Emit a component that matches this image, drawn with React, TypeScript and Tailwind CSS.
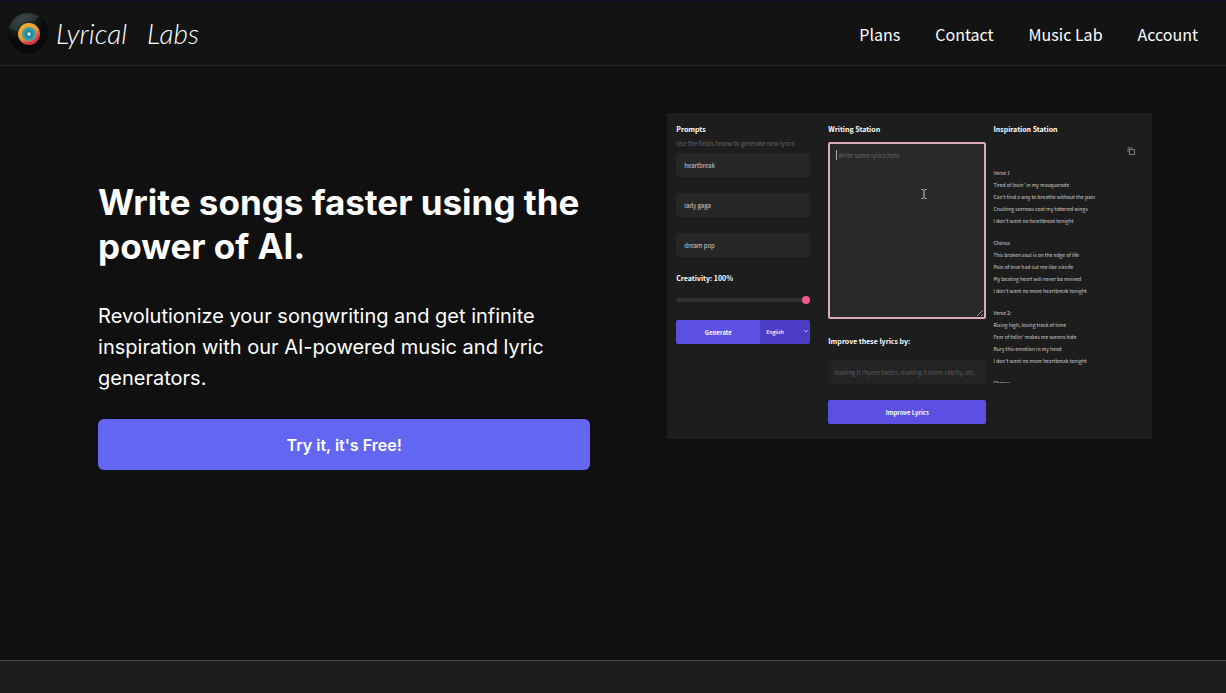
import { useId } from "react";

const cjk = "font-['Noto_Sans_CJK_SC','Open_Sans',sans-serif]";

const navLinks = ["Plans", "Contact", "Music Lab", "Account"];

const verses = [
  [
    "Verse 1",
    "Tired of losin' in my masquerade",
    "Can't find a way to breathe without the pain",
    "Crushing sorrows coat my tattered wings",
    "I don't want no heartbreak tonight",
  ],
  [
    "Chorus",
    "This broken soul is on the edge of life",
    "Pain of love had cut me like a knife",
    "My beating heart will never be revived",
    "I don't want no more heartbreak tonight",
  ],
  [
    "Verse 2:",
    "Rising high, losing track of time",
    "Fear of fallin' makes me wanna hide",
    "Bury this emotion in my head",
    "I don't want no more heartbreak tonight",
  ],
  ["Chorus"],
];

function VinylLogo() {
  return (
    <svg viewBox="0 0 42 44" className="h-11 w-[42px]" aria-hidden="true">
      <defs>
        <radialGradient id="disc" cx="0.35" cy="0.15" r="0.8">
          <stop offset="0" stopColor="#344041" />
          <stop offset="0.4" stopColor="#182021" />
          <stop offset="0.7" stopColor="#070a0b" />
          <stop offset="1" stopColor="#090909" />
        </radialGradient>
        <linearGradient id="ring" x1="0.2" y1="0" x2="0.8" y2="1">
          <stop offset="0" stopColor="#f3b22c" />
          <stop offset="0.5" stopColor="#ee9a2e" />
          <stop offset="0.75" stopColor="#dc3f4c" />
          <stop offset="1" stopColor="#c42f52" />
        </linearGradient>
      </defs>
      <circle cx="20" cy="22" r="20" fill="url(#disc)" />
      <path d="M1 17A20 20 0 0 1 31 5L26 11A12 12 0 0 0 9 20Z" fill="#3f4b4c" opacity="0.5" />
      <circle cx="21" cy="23" r="11" fill="url(#ring)" />
      <circle cx="21" cy="23" r="7.500" fill="#e5a746" />
      <circle cx="21" cy="23" r="7" fill="#3a9c9f" />
      <circle cx="21" cy="23" r="4" fill="#2287a2" />
      <circle cx="21" cy="23" r="1.700" fill="#e9f4ee" />
    </svg>
  );
}

function Header() {
  return (
    <header className="flex items-center justify-between border-t-2 border-b border-t-[#170b2b] border-b-[#292929] bg-[#131313] pt-[9px] pr-7 pb-2.5 pl-2">
      <a href="#home" className="flex items-center gap-1.5 text-white">
        <VinylLogo />
        <span className="flex gap-5 font-['Lato',sans-serif] text-[28px] leading-8 font-light italic">
          <span>Lyrical</span>
          <span>Labs</span>
        </span>
      </a>
      <nav className={`flex gap-[35px] pt-0.5 text-[16px] leading-6 font-normal text-white ${cjk}`}>
        {navLinks.map((label) => (
          <a key={label} href={`#${label.toLowerCase().replace(" ", "-")}`}>
            {label}
          </a>
        ))}
      </nav>
    </header>
  );
}

function Prompts() {
  const id = useId();
  return (
    <section className="flex flex-col">
      <h2 className="text-[7px] leading-3 font-bold text-white">Prompts</h2>
      <p className="mt-[3px] text-[6px] leading-3 whitespace-nowrap text-[#666666]">
        Use the fields below to generate new lyrics
      </p>
      <div className="mt-[3px] flex flex-col gap-4">
        {["heartbreak", "lady gaga", "dream pop"].map((value, i) => (
          <input
            key={value}
            aria-label={`Prompt ${i + 1}`}
            defaultValue={value}
            className="h-6 w-full rounded-xs bg-[#262626] px-2 text-[6px] text-[#d0d0d0] outline-none"
          />
        ))}
      </div>
      <label htmlFor={id} className="mt-[15px] text-[7px] leading-3 font-bold text-white">
        Creativity: 100%
      </label>
      <input
        id={id}
        type="range"
        min={0}
        max={100}
        defaultValue={100}
        className="mt-3 h-2 w-full appearance-none bg-transparent [&::-webkit-slider-runnable-track]:h-1 [&::-webkit-slider-runnable-track]:rounded-full [&::-webkit-slider-runnable-track]:bg-[#303030] [&::-webkit-slider-thumb]:-mt-0.5 [&::-webkit-slider-thumb]:h-2 [&::-webkit-slider-thumb]:w-2 [&::-webkit-slider-thumb]:appearance-none [&::-webkit-slider-thumb]:rounded-full [&::-webkit-slider-thumb]:bg-[#f0568f]"
      />
      <div className="mt-4 flex h-6 overflow-hidden rounded-xs text-white">
        <button className="flex-1 bg-[#5b50e2] text-[6px] font-bold">Generate</button>
        <div className="relative flex w-[50px] bg-[#4c3dc4]">
          <select
            aria-label="Language"
            className="block h-6 w-full appearance-none bg-transparent px-1.5 text-[5px] leading-6 font-medium outline-none"
          >
            <option>English</option>
          </select>
          <svg
            viewBox="0 0 6 4"
            className="pointer-events-none absolute top-2.5 right-0.5 w-1"
            fill="none"
            stroke="#ffffff"
            aria-hidden="true"
          >
            <path d="M0.500 0.500L3 3L5.500 0.500" />
          </svg>
        </div>
      </div>
    </section>
  );
}

function WritingStation() {
  const lyricsId = useId();
  const improveId = useId();
  return (
    <section className="flex flex-col">
      <label htmlFor={lyricsId} className="text-[7px] leading-3 font-bold text-white">
        Writing Station
      </label>
      <div className="relative mt-[7px] flex">
        <textarea
          id={lyricsId}
          placeholder="Write some lyrics here"
          className="h-[177px] w-full rounded-xs border-2 border-[#dcaab9] bg-[#292929] px-2 py-1 text-[6px] leading-4 text-white outline-none placeholder:text-[#686868]"
        />
        <span className="absolute top-2 left-2 h-2.5 w-px bg-[#a8a8a8]" />
        <svg
          viewBox="0 0 8 12"
          className="absolute top-[46px] left-[92px] h-3 w-2"
          fill="none"
          stroke="#cccccc"
          aria-hidden="true"
        >
          <path d="M1.500 1.500H3L4 2.500L5 1.500H6.500M4 2.500V9.500M1.500 10.500H3L4 9.500L5 10.500H6.500" />
        </svg>
      </div>
      <label htmlFor={improveId} className="mt-4 text-[7px] leading-3 font-bold text-white">
        Improve these lyrics by:
      </label>
      <input
        id={improveId}
        placeholder="making it rhyme better, making it more catchy, etc."
        className="mt-[13px] h-6 w-full rounded-xs bg-[#232323] px-1.5 text-[6px] text-white outline-none placeholder:text-[#5c5c5c]"
      />
      <button className="mt-4 h-6 rounded-xs bg-[#5b50e2] text-[6px] font-bold text-white">
        Improve Lyrics
      </button>
    </section>
  );
}

function InspirationStation() {
  return (
    <section className="flex flex-col">
      <h2 className="text-[7px] leading-3 font-bold text-white">Inspiration Station</h2>
      <button aria-label="Copy lyrics" className="mt-3 mr-2 self-end">
        <svg viewBox="0 0 8 8" className="h-2 w-2" fill="none" stroke="#777777" aria-hidden="true">
          <path d="M1 5.500V1H5.500" strokeWidth="1" />
          <rect x="2.500" y="2.500" width="5" height="5" />
        </svg>
      </button>
      <div className="mt-3 flex h-[216px] flex-col gap-2.5 overflow-hidden text-[5px] leading-3 whitespace-nowrap text-[#d0d0d0]">
        {verses.map((lines, i) => (
          <div key={i} className="shrink-0">
            {lines.map((line) => (
              <p key={line}>{line}</p>
            ))}
          </div>
        ))}
      </div>
    </section>
  );
}

export default function App() {
  return (
    <div className="flex min-h-screen flex-col bg-[#101010] font-['Inter',sans-serif] text-white">
      <Header />
      <main className="grid flex-1 grid-cols-[492fr_485fr] items-start gap-x-[77px] pt-[47px] pr-[6%] pb-16 pl-[8%]">
        <div className="flex flex-col pt-[67px]">
          <h1 className="text-[35px] leading-11 font-bold">
            Write songs faster using the power of AI.
          </h1>
          <p className="mt-[33px] text-[20px] leading-[31px]">
            Revolutionize your songwriting and get infinite inspiration with our AI-powered music
            and lyric generators.
          </p>
          <button className="mt-[25px] h-[51px] rounded-md bg-[#6366f1] text-[16px] font-semibold">
            Try it, it's Free!
          </button>
        </div>
        <div
          className={`grid grid-cols-[minmax(0,152fr)_minmax(0,165fr)_minmax(0,150fr)] bg-[#1e1d1e] px-[9px] pt-2.5 pb-[15px] ${cjk}`}
        >
          <div className="pr-[18px]">
            <Prompts />
          </div>
          <div className="pr-[7px]">
            <WritingStation />
          </div>
          <InspirationStation />
        </div>
      </main>
      <section className="h-[33px] border-t border-[#4a4a4a] bg-[#1d1d1d]" />
    </div>
  );
}
